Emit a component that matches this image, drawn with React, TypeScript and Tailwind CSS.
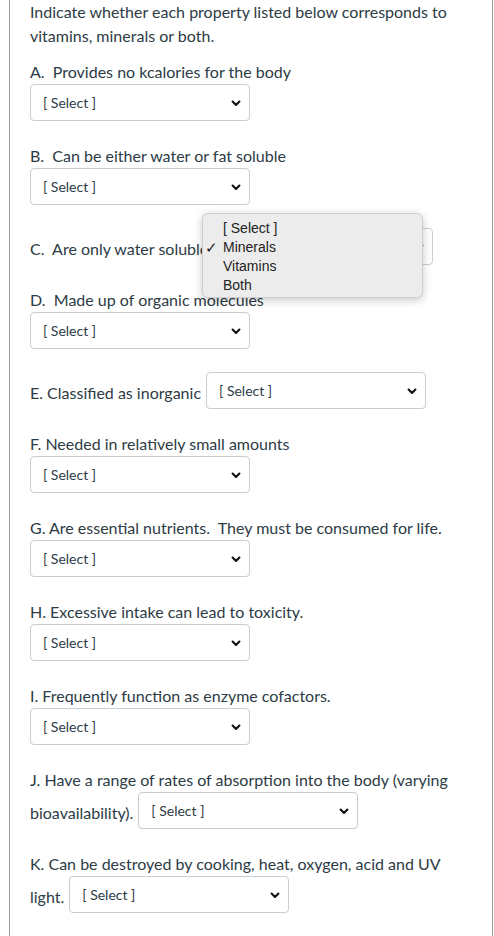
import React from 'react';

const Chevron: React.FC = () => (
  <svg width="10" height="7" viewBox="0 0 10 7" className="shrink-0">
    <path d="M1.6 1.6 L5 5 L8.4 1.6" fill="none" stroke="#111" strokeWidth="2.1" strokeLinecap="round" strokeLinejoin="round" />
  </svg>
);

const SelectBox: React.FC = () => (
  <div className="flex items-baseline justify-between w-[220px] h-[37px] shrink-0 border border-[#c7cdd1] rounded-[4px] bg-white pl-[12px] pr-[8px] pt-[8px]">
    <span className="text-[14px] leading-[19px] text-[#2d3b45]">[ Select ]</span>
    <span className="self-center -mt-[7px]">
      <Chevron />
    </span>
  </div>
);

const Stacked: React.FC<{ label: string }> = ({ label }) => (
  <div className="flex flex-col">
    <p className="leading-6 whitespace-pre">{label}</p>
    <SelectBox />
  </div>
);

const Inline: React.FC<{ label: string; children?: React.ReactNode }> = ({ label, children }) => (
  <div className="relative flex items-start gap-[5px]">
    <p className="leading-6 mt-[9px] whitespace-pre">{label}</p>
    <SelectBox />
    {children}
  </div>
);

const options = ['[ Select ]', 'Minerals', 'Vitamins', 'Both'];

const OptionsPopup: React.FC = () => (
  <div className="absolute left-[172px] top-[-15px] w-[221px] h-[85px] rounded-[6px] border border-[#cfcfcf] bg-[#ececec] shadow-[0_2px_8px_rgba(0,0,0,0.22)] pt-[5px] font-['Liberation_Sans',sans-serif] text-[14px] text-[#222]">
    {options.map(o => (
      <div key={o} className="flex items-center h-[19px]">
        <span className="w-[20px] pl-[2px] text-[15px] leading-[19px]">{o === 'Minerals' ? '✓' : ''}</span>
        <span>{o}</span>
      </div>
    ))}
  </div>
);

export default function App() {
  return (
    <div className="min-h-[936px] bg-white font-['Lato','Noto_Sans',sans-serif] text-[16px] text-[#2d3b45]">
      <div className="ml-[9px] w-[484px] min-h-[936px] border-x border-[#9a9a9a] pl-[20px] pr-[16px]">
        <p className="leading-6 mb-3">
          Indicate whether each property listed below corresponds to vitamins, minerals or both.
        </p>

        <div className="flex flex-col gap-[23px]">
          <Stacked label="A.  Provides no kcalories for the body" />
          <Stacked label="B.  Can be either water or fat soluble" />
          <Inline label="C.  Are only water soluble">
            <OptionsPopup />
          </Inline>
          <Stacked label="D.  Made up of organic molecules" />
          <Inline label="E. Classified as inorganic" />
          <Stacked label="F. Needed in relatively small amounts" />
          <Stacked label="G. Are essential nutrients.  They must be consumed for life." />
          <Stacked label="H. Excessive intake can lead to toxicity." />
          <Stacked label="I. Frequently function as enzyme cofactors." />
          <div className="flex flex-col">
            <p className="leading-6">J. Have a range of rates of absorption into the body (varying</p>
            <Inline label="bioavailability)." />
          </div>
          <div className="flex flex-col">
            <p className="leading-6">K. Can be destroyed by cooking, heat, oxygen, acid and UV</p>
            <Inline label="light." />
          </div>
        </div>
      </div>
    </div>
  );
}
